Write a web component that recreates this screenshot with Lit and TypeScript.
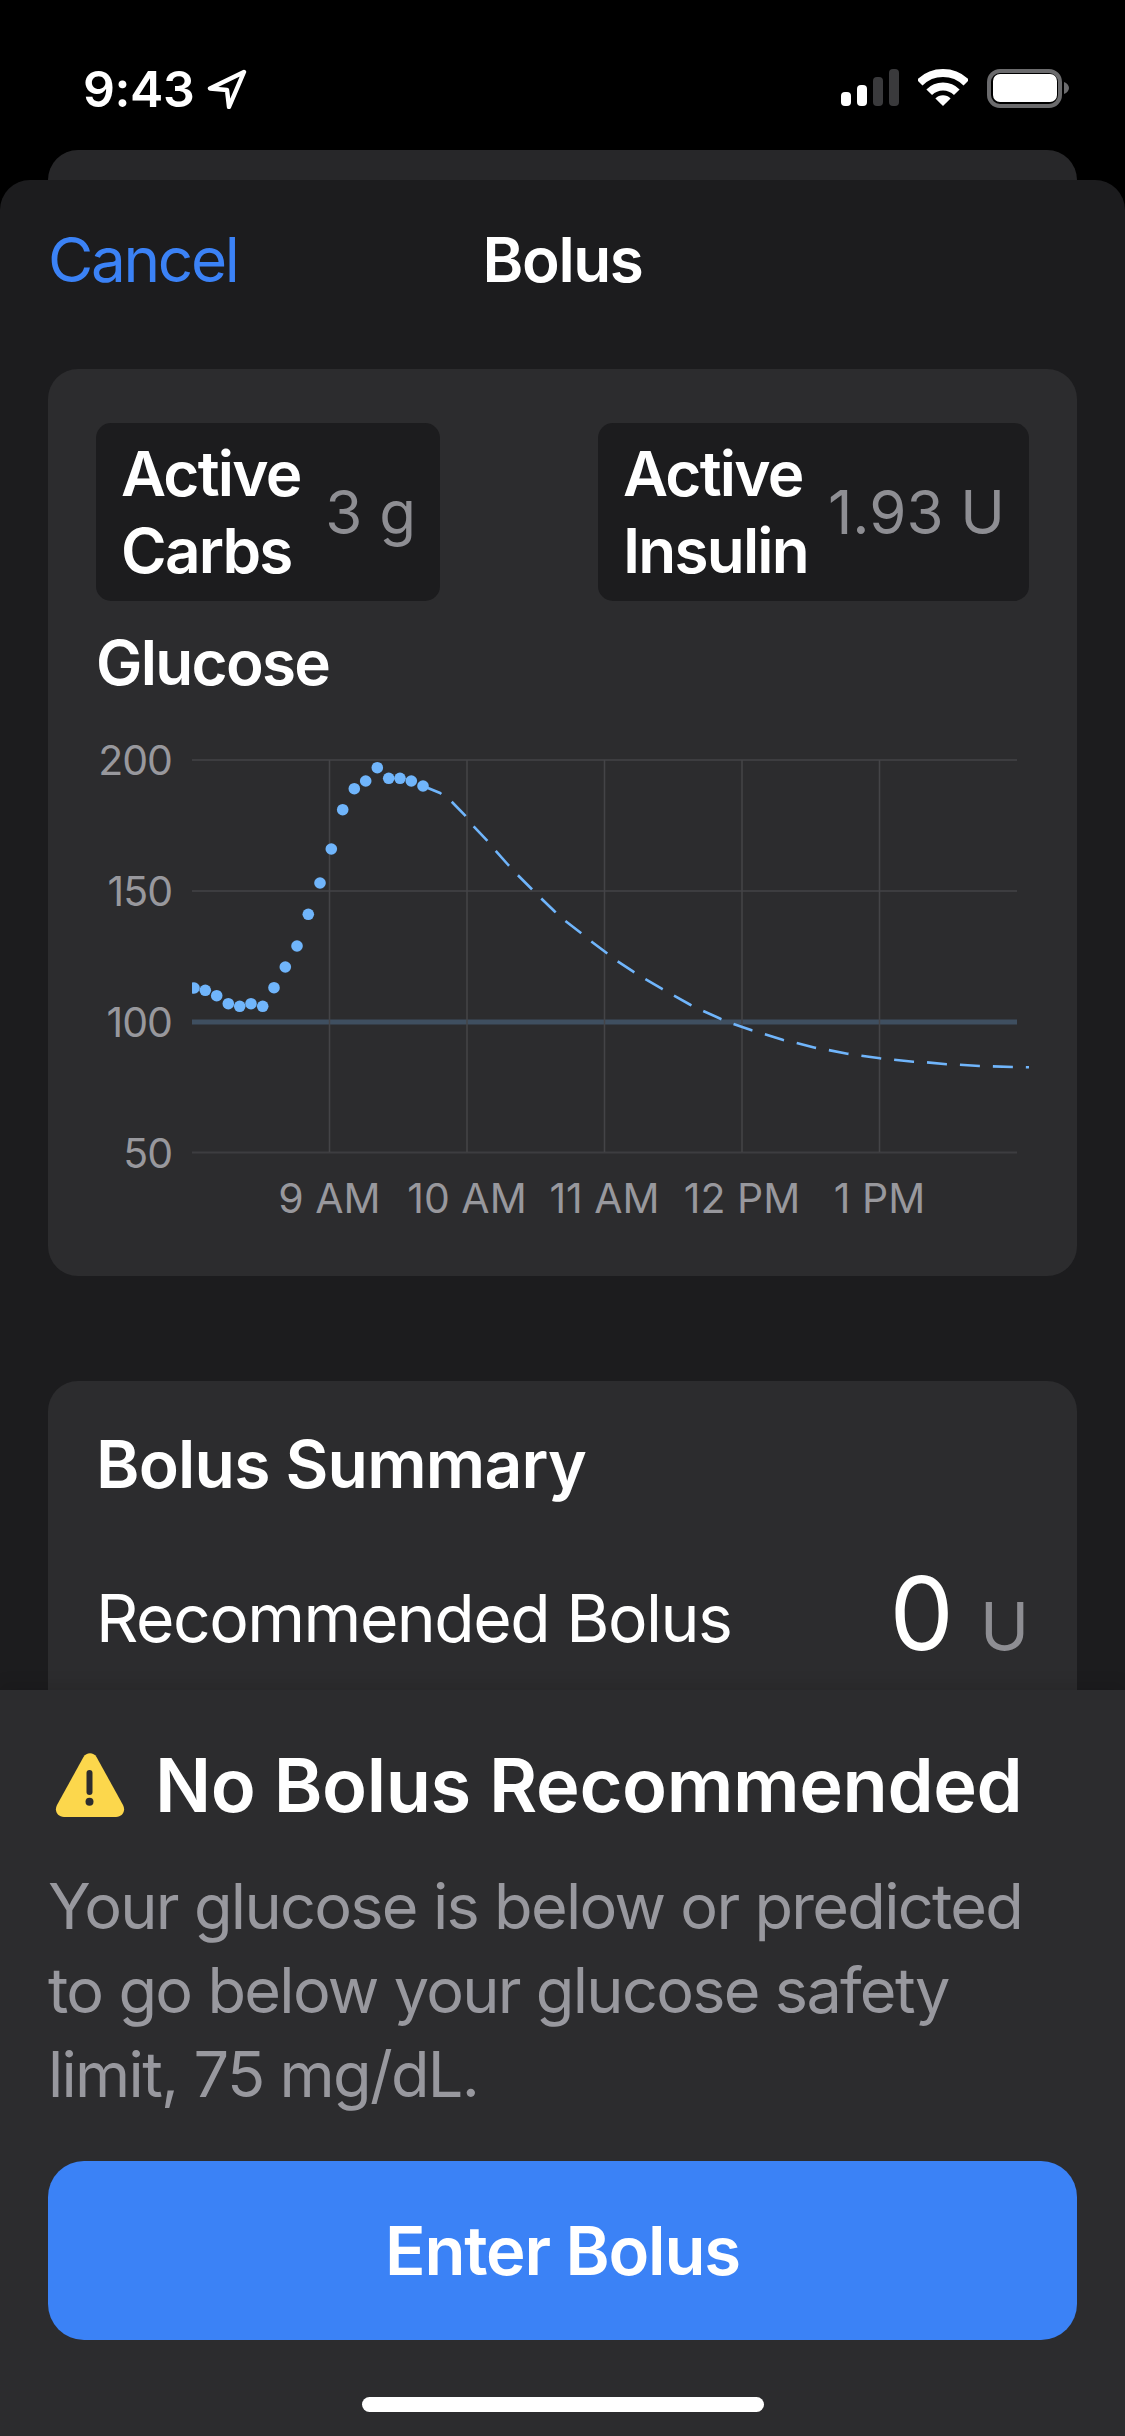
import {LitElement, html, css, svg} from 'lit';
import {customElement} from 'lit/decorators.js';

// glucose readings, in page pixels (the chart's viewBox uses the same numbers)
const READINGS: [number, number][] = [
    [194, 988], [205.3, 990.3], [216.7, 995.7], [228.3, 1003.7], [239.7, 1006.3],
    [251, 1003.7], [262.7, 1006.3], [274, 987.7], [285.3, 967], [297, 946],
    [308.3, 914.3], [320, 883], [331.3, 849], [342.7, 809.7], [354.3, 788.7],
    [365.7, 781], [377.3, 767.7], [388.7, 778.3], [400, 778.3], [411.3, 781],
    [423, 786],
];
const FORECAST: [number, number][] = [
    [423, 786], [440, 793], [451.7, 801.7], [465, 815.3], [473.3, 826], [486.7, 840],
    [495, 850], [508.3, 865], [516.7, 874], [531.7, 889], [540.7, 898], [555, 911.7],
    [565, 920.7], [580, 932.3], [590.7, 941], [605.7, 952.3], [616.7, 960.7], [633.3, 971.7],
    [645, 979], [661.7, 988.7], [673.3, 995.3], [690.7, 1005], [702.7, 1010.7], [721, 1019],
    [732.7, 1023.7], [751.7, 1030.3], [764, 1034], [783.3, 1040], [796, 1042.7], [815, 1047.7],
    [828.3, 1050], [847.3, 1053.7], [861, 1055.7], [880, 1058.3], [893.3, 1059.7], [913.3, 1061.7],
    [926, 1062.3], [946.7, 1064.3], [959.3, 1064.7], [979.3, 1066], [992, 1066.3], [1012.7, 1067],
    [1029, 1067.3],
];
const Y_TICKS: [string, number][] = [['200', 760], ['150', 891], ['100', 1022], ['50', 1152.5]];
const X_TICKS: [string, number][] = [['9 AM', 329.5], ['10 AM', 467], ['11 AM', 604.5], ['12 PM', 742], ['1 PM', 879.5]];

@customElement('glucose-chart')
class GlucoseChart extends LitElement {
    static styles = css`
    :host {
        display: block;
        height: 510px;
    }
    svg {
        display: block;
    }
    .grid {
        stroke: #3d3d40;
        stroke-width: 2;
    }
    .vgrid {
        stroke: #444447;
        stroke-width: 1.5;
    }
    .safety {
        stroke: #3f4f60;
        stroke-width: 5;
    }
    .forecast {
        fill: none;
        stroke: #70b5fb;
        stroke-width: 2.6;
        stroke-dasharray: 20 13;
    }
    .dot {
        fill: #70b5fb;
    }
    text {
        font-family: Inter, "Liberation Sans", sans-serif;
        font-size: 41px;
        fill: #98989d;
    }
    .ytick {
        letter-spacing: -1px;
    }
    `

    render() {
        const line = FORECAST.map(([x, y]) => `${x},${y}`).join(' ');
        return html`
            <svg width="1029" height="510" viewBox="48 720 1029 510">
                <defs>
                    <clipPath id="plot"><rect x="192" y="720" width="840" height="510"></rect></clipPath>
                </defs>
                ${Y_TICKS.map(([label, y]) => svg`
                    <line class="grid" x1="192" x2="1017" y1=${y} y2=${y}></line>
                    <text class="ytick" x="172" y=${y + 15} text-anchor="end">${label}</text>
                `)}
                <line class="safety" x1="192" x2="1017" y1="1022" y2="1022"></line>
                ${X_TICKS.map(([label, x]) => svg`
                    <line class="vgrid" x1=${x} x2=${x} y1="760" y2="1152"></line>
                    <text x=${x} y="1213" text-anchor="middle">${label}</text>
                `)}
                <polyline class="forecast" points=${line}></polyline>
                <g clip-path="url(#plot)">
                    ${READINGS.map(([x, y]) => svg`
                        <circle class="dot" cx=${x} cy=${y} r="5.8"></circle>
                    `)}
                </g>
            </svg>
        `;
    }
}

@customElement('app-root')
class AppRoot extends LitElement {
    static styles = css`
    :host {
        display: block;
        width: 1125px;
        height: 2436px;
        background: #000;
        overflow: hidden;
        font-family: Inter, "Liberation Sans", sans-serif;
        color: #fff;
    }
    .status {
        height: 150px;
        box-sizing: border-box;
        padding: 63px 56px 0 83px;
        display: flex;
        align-items: flex-start;
        justify-content: space-between;
    }
    .time {
        display: flex;
        align-items: center;
        gap: 13px;
        font-size: 50px;
        font-weight: 600;
        line-height: 52px;
        letter-spacing: -0.4px;
    }
    .status-icons {
        display: flex;
        align-items: flex-start;
        gap: 19px;
        padding-top: 6px;
    }
    .peek {
        height: 30px;
        margin: 0 48px;
        background: #272729;
        border-radius: 30px 30px 0 0;
    }
    .sheet {
        height: 1510px;
        box-sizing: border-box;
        overflow: hidden;
        background: #1c1c1e;
        border-radius: 30px 30px 0 0;
        padding: 0 48px;
    }
    .nav {
        height: 189px;
        display: grid;
        grid-template-columns: 1fr auto 1fr;
        align-items: center;
        font-size: 62px;
    }
    .cancel {
        color: #3b82f6;
        letter-spacing: -2.3px;
        padding-bottom: 30px;
    }
    .title {
        font-weight: 600;
        letter-spacing: -1.4px;
        padding-bottom: 30px;
    }
    .card {
        background: #2c2c2e;
        border-radius: 30px;
    }
    .card.glucose {
        height: 907px;
        box-sizing: border-box;
        padding: 54px 48px 0;
        margin-bottom: 105px;
    }
    .tiles {
        display: flex;
        justify-content: space-between;
    }
    .tile {
        height: 178px;
        box-sizing: border-box;
        padding: 0 24px 0 25px;
        display: flex;
        align-items: center;
        background: #1c1c1e;
        border-radius: 15px;
    }
    .tile.carbs {
        width: 344px;
    }
    .tile.insulin {
        width: 431px;
    }
    .tile-label {
        font-size: 62px;
        font-weight: 600;
        line-height: 77px;
        letter-spacing: -1.8px;
    }
    .tile-value {
        flex: 1;
        text-align: right;
        font-size: 60px;
        color: #8e8e93;
        white-space: nowrap;
    }
    .section {
        font-size: 62px;
        font-weight: 600;
        line-height: 70px;
        letter-spacing: -1.7px;
        margin: 27px 0 22px;
    }
    .chart-wrap {
        margin: 0 -48px;
    }
    .card.summary {
        height: 400px;
        box-sizing: border-box;
        padding: 48px 48px 0;
    }
    .summary-title {
        font-size: 66px;
        font-weight: 600;
        line-height: 70px;
        letter-spacing: -0.8px;
    }
    .row {
        display: flex;
        align-items: flex-end;
        justify-content: space-between;
        margin-top: 68px;
    }
    .row-label {
        font-size: 66px;
        line-height: 80px;
        letter-spacing: -1.5px;
        padding-bottom: 14px;
    }
    .row-value {
        font-size: 102px;
        line-height: 92px;
    }
    .row-unit {
        font-size: 66px;
        line-height: 92px;
        color: #8e8e93;
        margin-left: 26px;
    }
    .panel {
        height: 746px;
        box-sizing: border-box;
        background: #2c2c2e;
        box-shadow: 0 -6px 14px rgba(0, 0, 0, 0.1);
        padding: 50px 48px 0;
        position: relative;
    }
    .warning {
        display: flex;
        align-items: center;
        gap: 30px;
        padding-left: 7px;
        font-size: 74px;
        font-weight: 600;
        line-height: 90px;
        letter-spacing: -0.4px;
        white-space: nowrap;
    }
    .warning-text {
        font-size: 63px;
        line-height: 84px;
        letter-spacing: -1.7px;
        color: #98989e;
        margin: 34px 0 0;
    }
    .enter {
        display: flex;
        align-items: center;
        justify-content: center;
        height: 179px;
        margin-top: 45px;
        background: #3b82f6;
        border-radius: 36px;
        font-size: 67px;
        font-weight: 600;
        letter-spacing: -1.2px;
    }
    .home {
        position: absolute;
        left: 362px;
        bottom: 24px;
        width: 402px;
        height: 15px;
        background: #fff;
        border-radius: 8px;
    }
    `

    render() {
        return html`
            <div class="status">
                <div class="time">
                    9:43
                    <svg width="40" height="40" viewBox="0 0 40 40">
                        <path d="M37 3 L3 19.500 L20 21 L22 38 Z" fill="none" stroke="#fff" stroke-width="4.4" stroke-linejoin="round"></path>
                    </svg>
                </div>
                <div class="status-icons">
                    <svg width="58" height="37" viewBox="0 0 58 37">
                        <rect x="0" y="23" width="10" height="14" rx="4" fill="#fff"></rect>
                        <rect x="16" y="16" width="10" height="21" rx="4" fill="#fff"></rect>
                        <rect x="32" y="8" width="10" height="29" rx="4" fill="#3a3a3c"></rect>
                        <rect x="48" y="0" width="10" height="37" rx="4" fill="#3a3a3c"></rect>
                    </svg>
                    <svg width="50" height="37" viewBox="0 0 50 37">
                        <path d="M1.670 13.670 A33 33 0 0 1 48.330 13.670" fill="none" stroke="#fff" stroke-width="8"></path>
                        <path d="M11.210 23.210 A19.500 19.500 0 0 1 38.790 23.210" fill="none" stroke="#fff" stroke-width="8"></path>
                        <path d="M25 37 L17.400 29.400 A10.700 10.700 0 0 1 32.600 29.400 Z" fill="#fff"></path>
                    </svg>
                    <svg width="82" height="39" viewBox="0 0 82 39">
                        <rect x="2" y="2" width="71" height="35" rx="11" fill="none" stroke="#6b6b6d" stroke-width="4"></rect>
                        <rect x="6" y="5" width="64" height="28" rx="7" fill="#fff"></rect>
                        <path d="M77 13 C80 14 82 16.500 82 19 C82 21.500 80 24 77 25 Z" fill="#6b6b6d"></path>
                    </svg>
                </div>
            </div>
            <div class="peek"></div>
            <div class="sheet">
                <div class="nav">
                    <div class="cancel">Cancel</div>
                    <div class="title">Bolus</div>
                    <div></div>
                </div>
                <div class="card glucose">
                    <div class="tiles">
                        <div class="tile carbs">
                            <div class="tile-label">Active<br>Carbs</div>
                            <div class="tile-value">3 g</div>
                        </div>
                        <div class="tile insulin">
                            <div class="tile-label">Active<br>Insulin</div>
                            <div class="tile-value">1.93 U</div>
                        </div>
                    </div>
                    <div class="section">Glucose</div>
                    <div class="chart-wrap"><glucose-chart></glucose-chart></div>
                </div>
                <div class="card summary">
                    <div class="summary-title">Bolus Summary</div>
                    <div class="row">
                        <div class="row-label">Recommended Bolus</div>
                        <div><span class="row-value">0</span><span class="row-unit">U</span></div>
                    </div>
                </div>
            </div>
            <div class="panel">
                <div class="warning">
                    <svg width="70" height="65" viewBox="0 0 70 65">
                        <path d="M28.500 4 C31.500 -1 38.500 -1 41.500 4 L68 52 C71 58 67.500 64 61 64 L9 64 C2.500 64 -1 58 2 52 Z" fill="#fcd74c"></path>
                        <rect x="31.500" y="17" width="6" height="25" rx="3" fill="#2c2c2e"></rect>
                        <circle cx="34.500" cy="48.700" r="4" fill="#2c2c2e"></circle>
                    </svg>
                    No Bolus Recommended
                </div>
                <p class="warning-text">Your glucose is below or predicted to go below your glucose safety limit, 75 mg/dL.</p>
                <div class="enter">Enter Bolus</div>
                <div class="home"></div>
            </div>
        `;
    }
}
